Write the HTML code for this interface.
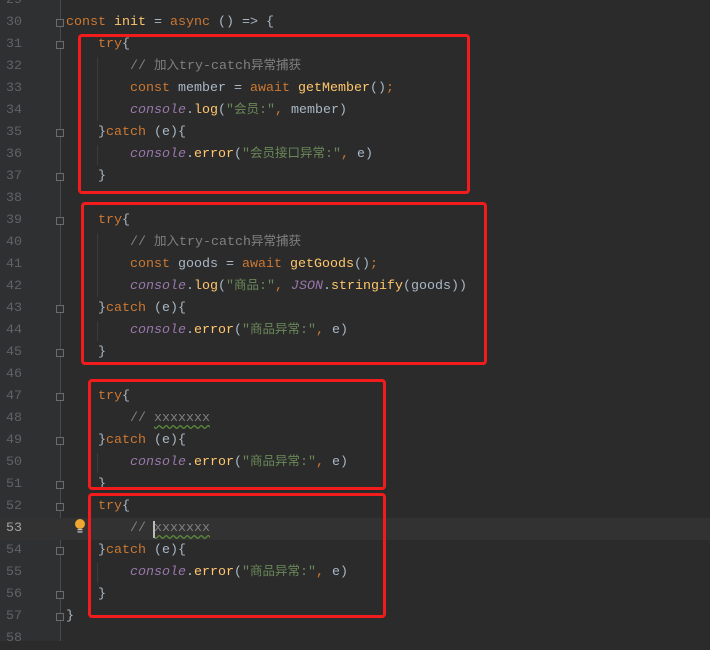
<!DOCTYPE html>
<html><head><meta charset="utf-8"><style>
html,body{margin:0;padding:0}
body{width:710px;height:641px;background:#2b2b2b;position:relative;overflow:hidden;font-family:"Liberation Mono","Noto Sans CJK SC",monospace;font-size:13.33px}
.g{position:absolute;left:0;top:0;width:60px;height:641px;background:#2f3032}
.gl{position:absolute;left:60px;top:0;width:1px;height:641px;background:#4a4a4a}
.hl{position:absolute;left:0;top:518px;width:710px;height:22px;background:#323232}
.n{position:absolute;left:0;width:22px;text-align:right;color:#5f6366;line-height:22px;height:22px}
.l{position:absolute;line-height:22px;height:22px;white-space:pre;color:#a9b7c6}
.k{color:#cc7832}.f{color:#ffc66d}.c{color:#808080}.s{color:#6a8759}.p{color:#9876aa;font-style:italic}
.z{font-family:"Noto Sans CJK SC",sans-serif;font-size:12.5px;line-height:0}
.w{text-decoration:underline wavy #5a8a3a;text-underline-offset:3px}
.b{position:absolute;border:3px solid #f21c1c;border-radius:4px;box-sizing:border-box}
.fd{position:absolute;left:56px;width:8px;height:8px;border:1px solid #6b6b6b;background:#2f3032;box-sizing:border-box}
.ig{position:absolute;width:1px;background:#3b3b3b}
</style></head><body>
<div class="g"></div><div class="gl"></div><div class="hl"></div>
<div class="n" style="top:-10px">29</div>
<div class="n" style="top:12px">30</div>
<div class="n" style="top:34px">31</div>
<div class="n" style="top:56px">32</div>
<div class="n" style="top:78px">33</div>
<div class="n" style="top:100px">34</div>
<div class="n" style="top:122px">35</div>
<div class="n" style="top:144px">36</div>
<div class="n" style="top:166px">37</div>
<div class="n" style="top:188px">38</div>
<div class="n" style="top:210px">39</div>
<div class="n" style="top:232px">40</div>
<div class="n" style="top:254px">41</div>
<div class="n" style="top:276px">42</div>
<div class="n" style="top:298px">43</div>
<div class="n" style="top:320px">44</div>
<div class="n" style="top:342px">45</div>
<div class="n" style="top:364px">46</div>
<div class="n" style="top:386px">47</div>
<div class="n" style="top:408px">48</div>
<div class="n" style="top:430px">49</div>
<div class="n" style="top:452px">50</div>
<div class="n" style="top:474px">51</div>
<div class="n" style="top:496px">52</div>
<div class="n" style="top:518px;color:#a4a3a3">53</div>
<div class="n" style="top:540px">54</div>
<div class="n" style="top:562px">55</div>
<div class="n" style="top:584px">56</div>
<div class="n" style="top:606px">57</div>
<div class="n" style="top:628px">58</div>

<div class="fd" style="top:19px"></div><div class="fd" style="top:41px"></div>
<div class="fd" style="top:129px"></div><div class="fd" style="top:173px"></div>
<div class="fd" style="top:217px"></div><div class="fd" style="top:305px"></div><div class="fd" style="top:349px"></div>
<div class="fd" style="top:393px"></div><div class="fd" style="top:437px"></div><div class="fd" style="top:481px"></div>
<div class="fd" style="top:503px"></div><div class="fd" style="top:547px"></div><div class="fd" style="top:591px"></div><div class="fd" style="top:613px"></div>

<div class="ig" style="left:97px;top:57px;height:64px"></div>
<div class="ig" style="left:97px;top:145px;height:20px"></div>
<div class="ig" style="left:97px;top:233px;height:64px"></div>
<div class="ig" style="left:97px;top:321px;height:20px"></div>
<div class="ig" style="left:97px;top:453px;height:20px"></div>
<div class="ig" style="left:97px;top:563px;height:20px"></div>

<div class="l" style="left:66px;top:12px"><span class="k">const </span><span class="f">init</span> = <span class="k">async</span> () =&gt; {</div>
<div class="l" style="left:98px;top:34px"><span class="k">try</span>{</div>
<div class="l c" style="left:130px;top:56px">// <span class="z">加入</span>try-catch<span class="z">异常捕获</span></div>
<div class="l" style="left:130px;top:78px"><span class="k">const </span>member = <span class="k">await </span><span class="f">getMember</span>()<span class="k">;</span></div>
<div class="l" style="left:130px;top:100px"><span class="p">console</span>.<span class="f">log</span>(<span class="s">"<span class="z">会员</span>:"</span><span class="k">, </span>member)</div>
<div class="l" style="left:98px;top:122px">}<span class="k">catch </span>(e){</div>
<div class="l" style="left:130px;top:144px"><span class="p">console</span>.<span class="f">error</span>(<span class="s">"<span class="z">会员接口异常</span>:"</span><span class="k">, </span>e)</div>
<div class="l" style="left:98px;top:166px">}</div>

<div class="l" style="left:98px;top:210px"><span class="k">try</span>{</div>
<div class="l c" style="left:130px;top:232px">// <span class="z">加入</span>try-catch<span class="z">异常捕获</span></div>
<div class="l" style="left:130px;top:254px"><span class="k">const </span>goods = <span class="k">await </span><span class="f">getGoods</span>()<span class="k">;</span></div>
<div class="l" style="left:130px;top:276px"><span class="p">console</span>.<span class="f">log</span>(<span class="s">"<span class="z">商品</span>:"</span><span class="k">, </span><span class="p">JSON</span>.<span class="f">stringify</span>(goods))</div>
<div class="l" style="left:98px;top:298px">}<span class="k">catch </span>(e){</div>
<div class="l" style="left:130px;top:320px"><span class="p">console</span>.<span class="f">error</span>(<span class="s">"<span class="z">商品异常</span>:"</span><span class="k">, </span>e)</div>
<div class="l" style="left:98px;top:342px">}</div>

<div class="l" style="left:98px;top:386px"><span class="k">try</span>{</div>
<div class="l c" style="left:130px;top:408px">// <span class="w">xxxxxxx</span></div>
<div class="l" style="left:98px;top:430px">}<span class="k">catch </span>(e){</div>
<div class="l" style="left:130px;top:452px"><span class="p">console</span>.<span class="f">error</span>(<span class="s">"<span class="z">商品异常</span>:"</span><span class="k">, </span>e)</div>
<div class="l" style="left:98px;top:474px">}</div>

<div class="l" style="left:98px;top:496px"><span class="k">try</span>{</div>
<div class="l c" style="left:130px;top:518px">// <span class="w">xxxxxxx</span></div>
<div style="position:absolute;left:153px;top:521px;width:2px;height:17px;background:#bbb"></div>
<div class="l" style="left:98px;top:540px">}<span class="k">catch </span>(e){</div>
<div class="l" style="left:130px;top:562px"><span class="p">console</span>.<span class="f">error</span>(<span class="s">"<span class="z">商品异常</span>:"</span><span class="k">, </span>e)</div>
<div class="l" style="left:98px;top:584px">}</div>
<div class="l" style="left:66px;top:606px">}</div>

<svg style="position:absolute;left:74px;top:518px" width="12" height="16"><circle cx="6" cy="6" r="5" fill="#f0a732"/><rect x="3.5" y="11" width="5" height="1.3" fill="#bbb"/><rect x="3.5" y="13.3" width="5" height="1.3" fill="#bbb"/></svg>

<div class="b" style="left:78px;top:34px;width:392px;height:160px"></div>
<div class="b" style="left:81px;top:202px;width:406px;height:163px"></div>
<div class="b" style="left:88px;top:379px;width:298px;height:111px"></div>
<div class="b" style="left:88px;top:493px;width:298px;height:125px"></div>
</body></html>
